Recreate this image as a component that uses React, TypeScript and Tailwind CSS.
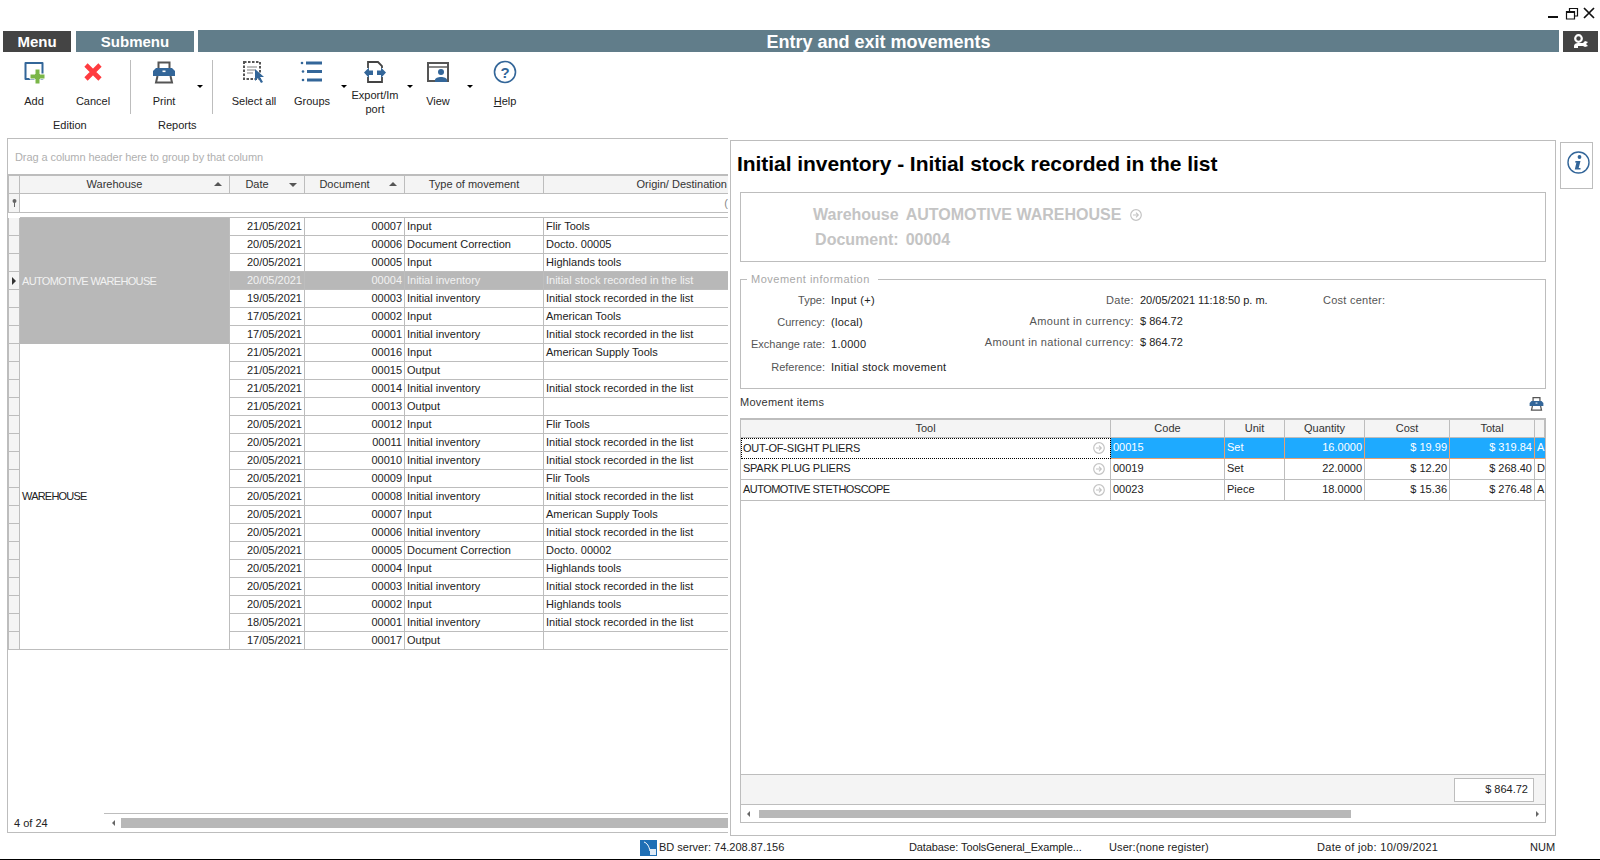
import React from "react";

const rows: [string, string, string, string][] = [
  ["21/05/2021", "00007", "Input", "Flir Tools"],
  ["20/05/2021", "00006", "Document Correction", "Docto. 00005"],
  ["20/05/2021", "00005", "Input", "Highlands tools"],
  ["20/05/2021", "00004", "Initial inventory", "Initial stock recorded in the list"],
  ["19/05/2021", "00003", "Initial inventory", "Initial stock recorded in the list"],
  ["17/05/2021", "00002", "Input", "American Tools"],
  ["17/05/2021", "00001", "Initial inventory", "Initial stock recorded in the list"],
  ["21/05/2021", "00016", "Input", "American Supply Tools"],
  ["21/05/2021", "00015", "Output", ""],
  ["21/05/2021", "00014", "Initial inventory", "Initial stock recorded in the list"],
  ["21/05/2021", "00013", "Output", ""],
  ["20/05/2021", "00012", "Input", "Flir Tools"],
  ["20/05/2021", "00011", "Initial inventory", "Initial stock recorded in the list"],
  ["20/05/2021", "00010", "Initial inventory", "Initial stock recorded in the list"],
  ["20/05/2021", "00009", "Input", "Flir Tools"],
  ["20/05/2021", "00008", "Initial inventory", "Initial stock recorded in the list"],
  ["20/05/2021", "00007", "Input", "American Supply Tools"],
  ["20/05/2021", "00006", "Initial inventory", "Initial stock recorded in the list"],
  ["20/05/2021", "00005", "Document Correction", "Docto. 00002"],
  ["20/05/2021", "00004", "Input", "Highlands tools"],
  ["20/05/2021", "00003", "Initial inventory", "Initial stock recorded in the list"],
  ["20/05/2021", "00002", "Input", "Highlands tools"],
  ["18/05/2021", "00001", "Initial inventory", "Initial stock recorded in the list"],
  ["17/05/2021", "00017", "Output", ""],
];

const items = [
  ["OUT-OF-SIGHT PLIERS", "00015", "Set", "16.0000", "$ 19.99", "$ 319.84", "A", "tracking-[-0.2px]"],
  ["SPARK PLUG PLIERS", "00019", "Set", "22.0000", "$ 12.20", "$ 268.40", "D", "tracking-[-0.25px]"],
  ["AUTOMOTIVE STETHOSCOPE", "00023", "Piece", "18.0000", "$ 15.36", "$ 276.48", "A", "tracking-[-0.55px]"],
];

function Printer({ size = 24 }: { size?: number }) {
  return (
    <svg width={size} height={size} viewBox="0 0 24 24">
      <path d="M6.5 8V2.5h11V8" fill="none" stroke="#555" strokeWidth="2" />
      <path d="M4 8h16l3 3v5H1v-5z" fill="#336699" />
      <rect x="10.5" y="10.5" width="3" height="1.6" fill="#fff" />
      <path d="M5.5 16l-1.5 6.5h16L18.500 16" fill="none" stroke="#555" strokeWidth="2" />
    </svg>
  );
}

function ArrowCircle() {
  return (
    <svg width="12" height="12" viewBox="0 0 12 12" className="shrink-0">
      <circle cx="6" cy="6" r="5.3" fill="none" stroke="#c4c4c4" strokeWidth="1.2" />
      <path d="M3 6h5.500M6 3.700L8.300 6 6 8.300" fill="none" stroke="#c4c4c4" strokeWidth="1.1" />
    </svg>
  );
}

function Caret() {
  return <div className="h-0 w-0 border-x-[3px] border-t-[3px] border-x-transparent border-t-black" />;
}

function Tool({ w, label, icon, caret, two }: { w: string; label: React.ReactNode; icon: React.ReactNode; caret?: string; two?: boolean }) {
  return (
    <div className={`relative flex flex-col items-center ${w}`}>
      <div className="flex h-[28px] items-center justify-center">{icon}</div>
      <div className={`whitespace-nowrap text-center text-[11px] leading-[14px] text-[#222] ${two ? "mt-[2px]" : "mt-[8px]"}`}>{label}</div>
      {caret && <div className={`absolute top-[27px] ${caret}`}><Caret /></div>}
    </div>
  );
}

function HeaderCell({ label, sort, right }: { label: string; sort?: "up" | "down"; right?: boolean }) {
  return (
    <div className={`relative flex h-[17px] items-center whitespace-nowrap border-r border-[#bdbdbd] bg-[#f4f4f4] text-[#333] ${right ? "justify-end border-r-0 pr-[1px]" : "justify-center"} ${sort ? "pr-[20px]" : ""}`}>
      <span>{label}</span>
      {sort === "up" && <div className="absolute right-[7px] top-[6px] h-0 w-0 border-x-[4px] border-b-[4px] border-x-transparent border-b-[#555]" />}
      {sort === "down" && <div className="absolute right-[7px] top-[7px] h-0 w-0 border-x-[4px] border-t-[4px] border-x-transparent border-t-[#555]" />}
    </div>
  );
}

export default function App() {
  return (
    <div className="flex h-[860px] w-[1600px] flex-col overflow-hidden bg-white font-['Liberation_Sans',sans-serif] text-[11px] text-[#222]">
      {/* Window controls */}
      <div className="flex h-[30px] items-start justify-end pr-[4px] pt-[7px]">
        <svg width="50" height="13" viewBox="0 0 50 13">
          <path d="M2 10h10" stroke="#111" strokeWidth="2" />
          <path d="M20.500 4.500h8v7.500h-8zM20.500 5.500h8M23.500 4V1.500h8v7.500h-3" fill="none" stroke="#111" strokeWidth="1.2" />
          <path d="M38 1l10 10M48 1L38 11" stroke="#111" strokeWidth="1.7" />
        </svg>
      </div>

      {/* Menu bar */}
      <div className="flex h-[22px] items-end pl-[3px]">
        <div className="flex h-[21px] w-[68px] items-center justify-center bg-[#444444] pt-[1px] text-[15px] font-bold text-white">Menu</div>
        <div className="ml-[5px] flex h-[21px] w-[118px] items-center justify-center bg-[#617d8a] pt-[1px] text-[15px] font-bold text-white">Submenu</div>
        <div className="ml-[4px] flex h-[22px] w-[1361px] items-center justify-center bg-[#617d8a] pt-[3px] text-[18px] font-bold text-white">Entry and exit movements</div>
        <div className="ml-[4px] flex h-[21px] w-[35px] items-center justify-center bg-[#444444]">
          <svg width="16" height="15" viewBox="0 0 16 15">
            <circle cx="5.500" cy="4.500" r="3.300" fill="none" stroke="#fff" strokeWidth="2.200" />
            <path d="M1 14v-2c0-2 2-3 4-3h5l2-2 3 1-2 2 2 2-3 1-2-1H5v2z" fill="#fff" />
          </svg>
        </div>
      </div>

      {/* Toolbar */}
      <div className="flex h-[86px] items-start pl-[8px] pt-[6px]">
        <div className="flex flex-col">
          <div className="flex">
            <Tool w="w-[52px]" label="Add" icon={
              <svg width="24" height="24" viewBox="0 0 24 24">
                <path d="M3.500 3h17v16h-17z" fill="none" stroke="#336699" strokeWidth="2" strokeLinejoin="round" />
                <path d="M13 9h5v5h5v5h-5v5h-5v-5H8v-5h5z" fill="#7ab648" stroke="#fff" strokeWidth="1" />
              </svg>
            } />
            <Tool w="w-[66px]" label="Cancel" icon={
              <svg width="20" height="20" viewBox="0 0 20 20">
                <path d="M3 3l14 14M17 3L3 17" stroke="#ff3b3f" strokeWidth="4.600" />
              </svg>
            } />
          </div>
          <div className="mt-[10px] pl-[45px] leading-[14px]">Edition</div>
        </div>
        <div className="ml-[4px] mt-[2px] h-[54px] w-px bg-[#bdbdbd]" />
        <div className="flex flex-col">
          <Tool w="w-[66px]" label="Print" caret="right-[-6px]" icon={<Printer />} />
          <div className="mt-[10px] pl-[27px] leading-[14px]">Reports</div>
        </div>
        <div className="ml-[15px] mt-[2px] h-[54px] w-px bg-[#bdbdbd]" />
        <Tool w="w-[70px] ml-[6px]" label="Select all" icon={
          <svg width="24" height="24" viewBox="0 0 24 24">
            <rect x="2" y="2" width="16" height="17" fill="none" stroke="#555" strokeWidth="2" strokeDasharray="2.500 1.500" />
            <path d="M5 7h10M5 10h8M5 13h6" stroke="#aaa" strokeWidth="1.400" />
            <path d="M13 9v12l3-3 3 5 2-1-3-5h4z" fill="#336699" />
          </svg>
        } />
        <Tool w="w-[46px]" label="Groups" caret="right-[-12px]" icon={
          <svg width="24" height="24" viewBox="0 0 24 24">
            <path d="M6 3h16M7 11.500h15M7 20h15" stroke="#336699" strokeWidth="3" />
            <circle cx="2" cy="3" r="1.300" fill="#336699" />
            <circle cx="3" cy="11.500" r="1.300" fill="#336699" />
            <circle cx="3" cy="20" r="1.300" fill="#336699" />
          </svg>
        } />
        <Tool w="w-[60px] ml-[10px]" two label={<>Export/Im<br />port</>} caret="right-[-8px]" icon={
          <svg width="24" height="24" viewBox="0 0 24 24">
            <path d="M5 8V2h10l4 4v2M5 17v5h14v-5" fill="none" stroke="#444" strokeWidth="1.800" />
            <path d="M1 12.500l5-5v3h4v4.500H6v3zM23 12.500l-5-5v3h-4v4.500h4v3z" fill="#336699" />
          </svg>
        } />
        <Tool w="w-[44px] ml-[11px]" label="View" caret="right-[-13px]" icon={
          <svg width="24" height="24" viewBox="0 0 24 24">
            <path d="M9 21H2V3h20v18h-1" fill="none" stroke="#555" strokeWidth="2" />
            <path d="M2 7h20" stroke="#555" strokeWidth="1.400" />
            <circle cx="15" cy="12" r="3" fill="#336699" />
            <path d="M9 22v-2c0-2 3-3 6-3s6 1 6 3v2z" fill="#336699" />
          </svg>
        } />
        <Tool w="w-[44px] ml-[23px]" label={<><span className="underline">H</span>elp</>} icon={
          <svg width="24" height="24" viewBox="0 0 24 24">
            <circle cx="12" cy="12" r="10.500" fill="none" stroke="#336699" strokeWidth="1.600" />
            <text x="12" y="17.500" textAnchor="middle" fontSize="15" fontWeight="700" fill="#336699" fontFamily="Liberation Sans">?</text>
          </svg>
        } />
      </div>

      {/* Body */}
      <div className="flex h-[698px] items-start pl-[7px]">
        {/* Left grid */}
        <div className="flex h-[695px] w-[721px] flex-col border border-r-0 border-[#bdbdbd]">
          <div className="flex h-[35px] items-center pl-[7px] pt-[2px] tracking-[-0.08px] text-[#b0b0b0]">Drag a column header here to group by that column</div>
          <div className="grid grid-cols-[11px_210px_75px_100px_139px_minmax(0,1fr)] border-b border-l border-t-2 border-[#bdbdbd] text-center">
            <div className="h-[17px] border-r border-[#bdbdbd] bg-[#f4f4f4]" />
            <HeaderCell label="Warehouse" sort="up" />
            <HeaderCell label="Date" sort="down" />
            <HeaderCell label="Document" sort="up" />
            <HeaderCell label="Type of movement" />
            <HeaderCell label="Origin/ Destination" right />
          </div>
          <div className="grid h-[19px] grid-cols-[11px_1fr] overflow-hidden border-b border-l border-[#bdbdbd]">
            <div className="flex items-center justify-center border-r border-[#bdbdbd] bg-[#f4f4f4]">
              <svg width="5" height="8" viewBox="0 0 5 8"><circle cx="2.500" cy="2" r="2" fill="#666" /><path d="M2.500 3v5" stroke="#666" /></svg>
            </div>
            <div className="flex items-center justify-end text-[#888]">(</div>
          </div>
          <div className="ml-[12px] h-[5px] border-b border-[#bdbdbd]" />
          <div className="grid auto-rows-[18px] grid-cols-[11px_210px_75px_100px_139px_minmax(0,1fr)] border-l border-[#bdbdbd]">
            <div className="col-start-2 row-start-1 row-span-7 flex items-center whitespace-nowrap border-r border-[#bdbdbd] bg-[#b8b8b8] pl-[2px] tracking-[-0.65px] text-[#f2f2f2]">AUTOMOTIVE WAREHOUSE</div>
            <div className="col-start-2 row-start-8 row-span-17 flex items-center border-b border-r border-[#bdbdbd] pl-[2px] tracking-[-0.8px]">WAREHOUSE</div>
            {rows.map((r, i) => {
              const sel = i === 3;
              const cell = `flex items-center whitespace-nowrap border-b border-r border-[#bdbdbd] px-[2px] ${sel ? "bg-[#b8b8b8] text-[#f2f2f2]" : ""}`;
              const rowN = { gridRowStart: i + 1 };
              return (
                <React.Fragment key={i}>
                  <div style={rowN} className="col-start-1 flex items-center border-b border-r border-[#bdbdbd] bg-[#f4f4f4]">
                    {sel && <div className="ml-[3px] h-0 w-0 border-y-[4px] border-l-[4px] border-y-transparent border-l-[#333]" />}
                  </div>
                  <div style={rowN} className={`col-start-3 justify-end ${cell}`}>{r[0]}</div>
                  <div style={rowN} className={`col-start-4 justify-end ${cell}`}>{r[1]}</div>
                  <div style={rowN} className={`col-start-5 ${cell}`}>{r[2]}</div>
                  <div style={rowN} className={`col-start-6 border-r-0 ${cell}`}>{r[3]}</div>
                </React.Fragment>
              );
            })}
          </div>
          <div className="flex-1" />
          <div className="flex h-[19px] items-stretch">
            <div className="flex w-[96px] items-center pl-[6px] pt-[1px]">4 of 24</div>
            <div className="flex flex-1 items-center border-t border-[#bdbdbd] pl-[8px]">
              <div className="h-0 w-0 border-y-[3px] border-r-[3px] border-y-transparent border-r-[#666]" />
              <div className="ml-[6px] h-[10px] flex-1 bg-[#b8b8b8]" />
            </div>
          </div>
        </div>

        {/* Right detail */}
        <div className="ml-[2px] mt-[2px] flex h-[696px] w-[826px] flex-col border border-[#bdbdbd] bg-white pl-[9px] pr-[9px]">
          <h1 className="ml-[-3px] mt-[11px] whitespace-nowrap text-[21px] font-bold leading-[24px] tracking-[-0.05px] text-black">Initial inventory - Initial stock recorded in the list</h1>
          <div className="mt-[16px] h-[70px] border border-[#bdbdbd] pl-[72px] pt-[9px] text-[16px] font-bold leading-[25px] text-[#c4c4c4]">
            <div className="grid w-fit grid-cols-[auto_auto] gap-x-[7px]">
              <div className="text-right">Warehouse</div>
              <div className="flex items-center gap-[9px] whitespace-nowrap">AUTOMOTIVE WAREHOUSE <ArrowCircle /></div>
              <div className="text-right">Document:</div>
              <div>00004</div>
            </div>
          </div>
          <fieldset className="mt-[10px] h-[117px] border border-[#bdbdbd]">
            <legend className="ml-[6px] pl-[4px] pr-[8px] leading-[14px] tracking-[0.5px] text-[#a8a8a8]">Movement information</legend>
            <div className="flex pt-[3px] text-[#555]">
              <div className="grid w-[224px] grid-cols-[84px_1fr] grid-rows-[23px_21px_23px_23px] items-center gap-x-[6px]">
                <div className="text-right">Type:</div><div className="tracking-[0.3px] text-[#222]">Input (+)</div>
                <div className="text-right">Currency:</div><div className="tracking-[0.3px] text-[#222]">(local)</div>
                <div className="text-right">Exchange rate:</div><div className="tracking-[0.3px] text-[#222]">1.0000</div>
                <div className="text-right">Reference:</div><div className="whitespace-nowrap tracking-[0.3px] text-[#222]">Initial stock movement</div>
              </div>
              <div className="ml-[6px] grid w-[352px] grid-cols-[163px_1fr] grid-rows-[22px_21px_21px] items-center gap-x-[6px] self-start tracking-[0.35px]">
                <div className="text-right">Date:</div><div className="whitespace-nowrap tracking-normal text-[#222]">20/05/2021 11:18:50 p. m.</div>
                <div className="whitespace-nowrap text-right">Amount in currency:</div><div className="tracking-normal text-[#222]">$ 864.72</div>
                <div className="whitespace-nowrap text-right">Amount in national currency:</div><div className="tracking-normal text-[#222]">$ 864.72</div>
              </div>
              <div className="flex h-[22px] items-center tracking-[0.25px]">Cost center:</div>
            </div>
          </fieldset>
          <div className="flex h-[27px] items-center justify-between tracking-[0.25px] text-[#333]">
            <span>Movement items</span>
            <span className="mr-[2px] mt-[2px]"><Printer size={15} /></span>
          </div>
          <div className="mt-[2px] flex h-[387px] flex-col border border-[#bdbdbd]">
            <div className="grid grid-cols-[370px_114px_60px_80px_85px_85px_minmax(0,1fr)] border-y border-[#bdbdbd] text-center text-[#333]">
              {["Tool", "Code", "Unit", "Quantity", "Cost", "Total", ""].map((h, i) => (
                <div key={i} className="flex h-[17px] items-center justify-center border-r border-[#bdbdbd] bg-[#f4f4f4]">{h}</div>
              ))}
            </div>
            {items.map((it, i) => {
              const sel = i === 0;
              const c = `flex items-center overflow-hidden whitespace-nowrap border-b border-r px-[2px] pb-[1px] ${sel ? "border-[#e8a070] bg-[#1eaaff] text-white" : "border-[#bdbdbd]"}`;
              return (
                <div key={i} className="grid h-[21px] grid-cols-[370px_114px_60px_80px_85px_85px_minmax(0,1fr)]">
                  <div className={`flex items-center justify-between whitespace-nowrap border-r pb-[1px] pl-[2px] pr-[5px] ${sel ? "border-[#bdbdbd] outline-1 -outline-offset-1 outline-black outline-dotted" : "border-b border-[#bdbdbd]"}`}>
                    <span className={it[7]}>{it[0]}</span><ArrowCircle />
                  </div>
                  <div className={c}>{it[1]}</div>
                  <div className={c}>{it[2]}</div>
                  <div className={`justify-end ${c}`}>{it[3]}</div>
                  <div className={`justify-end ${c}`}>{it[4]}</div>
                  <div className={`justify-end ${c}`}>{it[5]}</div>
                  <div className={`border-r-0 ${c}`}>{it[6]}</div>
                </div>
              );
            })}
            <div className="flex-1" />
            <div className="flex h-[30px] items-center justify-end border-t border-[#bdbdbd] bg-[#f4f4f4] pr-[11px]">
              <div className="flex h-[24px] w-[80px] items-center justify-end border border-[#bdbdbd] bg-white pr-[5px]">$ 864.72</div>
            </div>
          </div>
          <div className="flex h-[18px] items-center border border-t-0 border-[#bdbdbd] px-[6px]">
            <div className="h-0 w-0 border-y-[3px] border-r-[3px] border-y-transparent border-r-[#666]" />
            <div className="ml-[9px] h-[8px] w-[592px] bg-[#b8b8b8]" />
            <div className="ml-auto h-0 w-0 border-y-[3px] border-l-[3px] border-y-transparent border-l-[#666]" />
          </div>
        </div>

        {/* Info side */}
        <div className="ml-[4px] mt-[4px] flex h-[47px] w-[33px] items-start justify-center border border-[#bdbdbd] pl-[3px] pt-[8px]">
          <svg width="23" height="23" viewBox="0 0 23 23">
            <circle cx="11.500" cy="11.500" r="10.500" fill="none" stroke="#336699" strokeWidth="1.400" />
            <circle cx="12.500" cy="6" r="1.900" fill="#336699" />
            <path d="M8.500 10h5l-1.800 7h1.800v1.500H7.800l1.600-7H8z" fill="#336699" />
          </svg>
        </div>
      </div>

      {/* Status */}
      <div className="flex h-[23px] items-center">
        <div className="ml-[640px] flex w-[269px] items-center gap-[2px]">
          <svg width="17" height="16" viewBox="0 0 17 16"><rect width="17" height="16" fill="#1f6fb5" /><path d="M4 2c3 1 5 4 6 9" stroke="#fff" fill="none" /><rect x="10" y="9" width="6" height="6" fill="#dfeaf5" /></svg>
          <span>BD server: 74.208.87.156</span>
        </div>
        <div className="w-[200px] whitespace-nowrap tracking-[-0.1px]">Database: ToolsGeneral_Example...</div>
        <div className="w-[208px] whitespace-nowrap tracking-[0.1px]">User:(none register)</div>
        <div className="w-[213px] whitespace-nowrap tracking-[0.3px]">Date of job: 10/09/2021</div>
        <div>NUM</div>
      </div>
      <div className="h-[1px] bg-black" />
    </div>
  );
}
